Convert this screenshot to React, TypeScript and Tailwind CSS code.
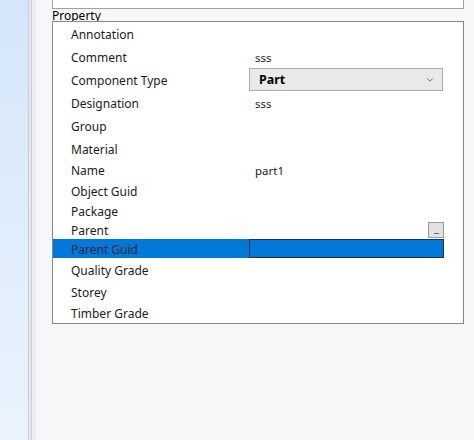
import { ChevronDown } from "lucide-react";

type Row = {
    label: string;
    h: string;
    value?: string;
    kind?: "text" | "combo" | "button" | "selected";
};

const rows: Row[] = [
    { label: "Annotation", h: "h-[23px]" },
    { label: "Comment", h: "h-[23px]", value: "sss" },
    { label: "Component Type", h: "h-[23px]", value: "Part", kind: "combo" },
    { label: "Designation", h: "h-[23px]", value: "sss" },
    { label: "Group", h: "h-[23px]" },
    { label: "Material", h: "h-[22px]" },
    { label: "Name", h: "h-[21px]", value: "part1" },
    { label: "Object Guid", h: "h-[20px]" },
    { label: "Package", h: "h-[20px]" },
    { label: "Parent", h: "h-[19px]", kind: "button" },
    { label: "Parent Guid", h: "h-[19px]", kind: "selected" },
    { label: "Quality Grade", h: "h-[22px]" },
    { label: "Storey", h: "h-[22px]" },
    { label: "Timber Grade", h: "h-[21px]" },
];

const PropertyRow = ({ row }: { row: Row }) => {
    const selected = row.kind === "selected";
    return (
        <div className={`flex w-[391px] items-center ${row.h} ${selected ? "bg-[#0078d7]" : ""}`}>
            <div className={`w-[196px] pl-[18px] pt-[3px] text-[12px] ${selected ? "text-[#1a2a3a]" : "text-[#1b1b1b]"}`}>
                {row.label}
            </div>
            {row.kind === "combo" && (
                <div className="flex h-[23px] w-[194px] items-center justify-between border border-[#adadad] bg-[#e9e9e9] pl-[9px] pr-[7px]">
                    <span className="pt-[2px] text-[12.5px] font-bold text-black">{row.value}</span>
                    <ChevronDown className="h-[10px] w-[10px] text-[#555]" strokeWidth={2} />
                </div>
            )}
            {row.kind === "button" && (
                <div className="flex flex-1 justify-end pr-[0px]">
                    <div className="flex h-[16px] w-[16px] items-end justify-center border border-[#999] bg-[#e1e1e1] pb-[3px]">
                        <div className="h-px w-[5px] bg-[#666]" />
                    </div>
                </div>
            )}
            {selected && <div className="h-full w-[195px] border border-[#1e3246] bg-[#0078d7]" />}
            {(!row.kind || row.kind === "text") && row.value && (
                <div className="pl-[6px] pt-[3px] text-[11.5px] text-[#1b1b1b]">{row.value}</div>
            )}
        </div>
    );
};

export default function App() {
    return (
        <div
            className="flex h-[440px] w-[474px] overflow-hidden bg-[#f7f7f9]"
            style={{ fontFamily: '"Noto Sans", "Open Sans", sans-serif' }}
        >
            <div className="h-full w-[28px] bg-gradient-to-b from-[#d4e6fa] to-[#eaf3fd]" />
            <div className="flex h-full w-[8px]">
                <div className="w-px bg-[#c9ccd2]" />
                <div className="w-[2px] bg-[#e6e8ec]" />
                <div className="w-px bg-[#c9ccd2]" />
                <div className="w-[4px] bg-[#eceef1]" />
            </div>
            <div className="flex flex-1 flex-col pl-[16px] pr-[10px]">
                <div className="h-[9px] w-[412px] border-x border-b border-[#9aa3ad] bg-white" />
                <div className="h-[12px] pt-px text-[12px] leading-[12px] text-black">Property</div>
                <div className="w-[412px] border border-[#828790] bg-white">
                    {rows.map((r) => (
                        <PropertyRow key={r.label} row={r} />
                    ))}
                </div>
            </div>
        </div>
    );
}
